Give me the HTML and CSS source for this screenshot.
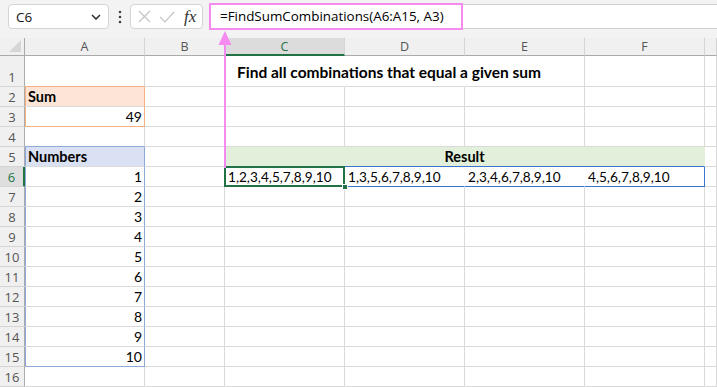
FILE: index.html
```html
<!DOCTYPE html>
<html lang="en">
<head>
  <meta charset="UTF-8">
  <title>FindSumCombinations</title>
  <link rel="stylesheet" href="styles.css">
</head>
<body>
  <div class="toolbar">
    <div class="namebox">
      <span>C6</span>
      <svg class="chev" width="10" height="6" viewBox="0 0 10 6"><path d="M1 1 L5 5 L9 1" fill="none" stroke="#333" stroke-width="1.6"/></svg>
    </div>
    <div class="dots">
      <svg width="4" height="14" viewBox="0 0 4 14"><circle cx="2" cy="2" r="1.3" fill="#444"/><circle cx="2" cy="7" r="1.3" fill="#444"/><circle cx="2" cy="12" r="1.3" fill="#444"/></svg>
    </div>
    <div class="fxbox">
      <svg width="13" height="13" viewBox="0 0 13 13"><path d="M1 1 L12 12 M12 1 L1 12" stroke="#c4c4c4" stroke-width="1.2"/></svg>
      <svg width="16" height="12" viewBox="0 0 16 12"><path d="M1 6 L6 11 L15 1" fill="none" stroke="#c4c4c4" stroke-width="1.2"/></svg>
      <span class="fx">fx</span>
    </div>
    <div class="formula">
      <div class="formula-text">=FindSumCombinations(A6:A15, A3)</div>
    </div>
  </div>

  <div class="sheet">
    <div class="hd corner"><svg width="12" height="12" viewBox="0 0 12 12"><polygon points="12,0 12,12 0,12" fill="#d6d6d6"/></svg></div>
    <div class="hd col">A</div>
    <div class="hd col">B</div>
    <div class="hd col active-col">C</div>
    <div class="hd col">D</div>
    <div class="hd col">E</div>
    <div class="hd col">F</div>
    <div class="hd col"></div>

    <div class="hd row tall">1</div>
    <div class="c tall a-sum-above"></div><div class="c tall"></div>
    <div class="c tall title spill"><span class="title-text">Find all combinations that equal a given sum</span></div>
    <div class="c tall spill"></div><div class="c tall"></div><div class="c tall"></div><div class="c tall"></div>

    <div class="hd row">2</div>
    <div class="c sum head">Sum</div><div class="c"></div><div class="c"></div><div class="c"></div><div class="c"></div><div class="c"></div><div class="c"></div>

    <div class="hd row">3</div>
    <div class="c sum sum-last num">49</div><div class="c"></div><div class="c"></div><div class="c"></div><div class="c"></div><div class="c"></div><div class="c"></div>

    <div class="hd row">4</div>
    <div class="c nums-above"></div><div class="c"></div><div class="c"></div><div class="c"></div><div class="c"></div><div class="c"></div><div class="c"></div>

    <div class="hd row">5</div>
    <div class="c nums head blue">Numbers</div><div class="c"></div>
    <div class="c result">Result</div>
    <div class="c"></div>

    <div class="hd row active-row">6</div>
    <div class="c nums num">1</div><div class="c"></div>
    <div class="c res selected">1,2,3,4,5,7,8,9,10</div>
    <div class="c res">1,3,5,6,7,8,9,10</div>
    <div class="c res">2,3,4,6,7,8,9,10</div>
    <div class="c res res-last">4,5,6,7,8,9,10</div>
    <div class="c"></div>

    <div class="hd row">7</div>
    <div class="c nums num">2</div><div class="c"></div><div class="c"></div><div class="c"></div><div class="c"></div><div class="c"></div><div class="c"></div>
    <div class="hd row">8</div>
    <div class="c nums num">3</div><div class="c"></div><div class="c"></div><div class="c"></div><div class="c"></div><div class="c"></div><div class="c"></div>
    <div class="hd row">9</div>
    <div class="c nums num">4</div><div class="c"></div><div class="c"></div><div class="c"></div><div class="c"></div><div class="c"></div><div class="c"></div>
    <div class="hd row">10</div>
    <div class="c nums num">5</div><div class="c"></div><div class="c"></div><div class="c"></div><div class="c"></div><div class="c"></div><div class="c"></div>
    <div class="hd row">11</div>
    <div class="c nums num">6</div><div class="c"></div><div class="c"></div><div class="c"></div><div class="c"></div><div class="c"></div><div class="c"></div>
    <div class="hd row">12</div>
    <div class="c nums num">7</div><div class="c"></div><div class="c"></div><div class="c"></div><div class="c"></div><div class="c"></div><div class="c"></div>
    <div class="hd row">13</div>
    <div class="c nums num">8</div><div class="c"></div><div class="c"></div><div class="c"></div><div class="c"></div><div class="c"></div><div class="c"></div>
    <div class="hd row">14</div>
    <div class="c nums num">9</div><div class="c"></div><div class="c"></div><div class="c"></div><div class="c"></div><div class="c"></div><div class="c"></div>
    <div class="hd row">15</div>
    <div class="c nums nums-last num">10</div><div class="c"></div><div class="c"></div><div class="c"></div><div class="c"></div><div class="c"></div><div class="c"></div>
    <div class="hd row">16</div>
    <div class="c"></div><div class="c"></div><div class="c"></div><div class="c"></div><div class="c"></div><div class="c"></div><div class="c"></div>

    <svg class="arrow" width="16" height="138" viewBox="0 0 16 138">
      <line x1="8" y1="10" x2="8" y2="137" stroke="#f58af0" stroke-width="2"/>
      <polygon points="8,0 1.5,14 14.5,14" fill="#f58af0"/>
    </svg>
  </div>
</body>
</html>
```

FILE: styles.css
```css
body {
  margin: 0;
  width: 717px;
  height: 387px;
  overflow: hidden;
  background: #fff;
  font-family: "Lato", "Liberation Sans", sans-serif;
  color: #000;
}

/* formula bar */
.toolbar {
  height: 38px;
  box-sizing: border-box;
  padding-top: 4px;
  background: #f3f3f3;
  display: flex;
  align-items: flex-start;
}
.namebox {
  margin-left: 8px;
  width: 101px;
  height: 25px;
  box-sizing: border-box;
  border: 1px solid #d4d4d4;
  border-radius: 4px;
  background: #fff;
  display: flex;
  align-items: center;
  justify-content: space-between;
  padding: 0 7px 0 7px;
  font-family: "Open Sans", sans-serif;
  font-size: 13.5px;
  color: #111;
}
.dots {
  width: 21px;
  height: 25px;
  display: flex;
  align-items: center;
  justify-content: center;
}
.fxbox {
  width: 73px;
  height: 25px;
  box-sizing: border-box;
  border: 1px solid #d4d4d4;
  border-radius: 4px;
  background: #fff;
  display: flex;
  align-items: center;
  gap: 8px;
  padding-left: 7px;
}
.fx {
  font-family: "Liberation Serif", serif;
  font-style: italic;
  font-size: 17px;
  color: #333;
  margin-left: 1px;
}
.formula {
  margin-left: 6px;
  flex: 1;
  height: 25px;
  box-sizing: border-box;
  border-top: 1px solid #cfcfcf;
  border-bottom: 1px solid #cfcfcf;
  background: #fff;
  display: flex;
}
.formula-text {
  width: 254px;
  height: 27px;
  margin-top: -2px;
  box-sizing: border-box;
  border: 2px solid #f58af0;
  background: #fff;
  padding-left: 9px;
  font-family: "Open Sans", sans-serif;
  font-size: 13.4px;
  line-height: 22px;
  white-space: nowrap;
}

/* sheet grid */
.sheet {
  position: relative;
  display: grid;
  grid-template-columns: 25px 120px 80px 120px 120px 120px 120px 12px;
  grid-template-rows: 18px 31px repeat(15, 20px);
}
.hd {
  box-sizing: border-box;
  background: #f0f0f0;
  color: #555;
  font-family: "Open Sans", sans-serif;
  font-size: 12.5px;
  display: flex;
  align-items: center;
  justify-content: center;
}
.hd.col {
  border-right: 1px solid #d4d4d4;
  border-bottom: 1px solid #ababab;
}
.hd.row {
  border-right: 1px solid #ababab;
  border-bottom: 1px solid #d4d4d4;
  font-size: 13px;
}
.hd.row.tall {
  align-items: flex-end;
}
.corner {
  border-right: 1px solid #ababab;
  border-bottom: 1px solid #ababab;
  justify-content: flex-end;
  align-items: flex-end;
  padding: 0 3px 3px 0;
}
.active-col {
  background: #dcdcdc;
  color: #217346;
  border-bottom: 2px solid #217346 !important;
}
.active-row {
  background: #dedede;
  color: #217346;
  border-right: 2px solid #217346 !important;
}

.c {
  box-sizing: border-box;
  border-right: 1px solid #dadada;
  border-bottom: 1px solid #dadada;
  font-size: 14.5px;
  padding: 0 3px;
  display: flex;
  align-items: flex-end;
  padding-bottom: 1px;
  white-space: nowrap;
}
.c.spill {
  border-right-color: #fff;
}
.c.num {
  justify-content: flex-end;
  padding-right: 2px;
  font-size: 14px;
}
.c.head {
  font-weight: bold;
}
.c.title {
  overflow: visible;
  font-weight: bold;
  font-size: 15.5px;
  padding-left: 12px;
  padding-bottom: 5px;
}
.title-text {
  position: relative;
  z-index: 1;
}

/* Sum block */
.a-sum-above {
  border-bottom-color: #f4b183;
}
.sum {
  border-right-color: #f4b183;
  box-shadow: inset 1px 0 0 #f4b183;
}
.sum.head {
  background: #fce4d6;
}
.sum-last {
  border-bottom-color: #f4b183;
}

/* Numbers block */
.nums-above {
  border-bottom-color: #8eaadb;
}
.nums {
  border-right-color: #8eaadb;
  box-shadow: inset 1px 0 0 #8eaadb;
}
.nums.head {
  background: #d9e1f2;
}
.nums-last {
  border-bottom-color: #8eaadb;
}

/* Result */
.result {
  grid-column: span 4;
  background: #e2efda;
  font-weight: bold;
  justify-content: center;
  border-right-color: #e2efda;
  border-bottom-color: #3c74cf;
}
.res {
  font-size: 13.6px;
  border-right-color: #fff;
  border-bottom-color: #3c74cf;
}
.res-last {
  border-right-color: #3c74cf;
}
.selected {
  position: relative;
}
.selected::before {
  content: "";
  position: absolute;
  left: -1px;
  top: -1px;
  width: 121px;
  height: 21px;
  border: 2px solid #217346;
  box-sizing: border-box;
}
.selected::after {
  content: "";
  position: absolute;
  right: -4px;
  bottom: -4px;
  width: 6px;
  height: 6px;
  background: #217346;
  border: 1px solid #fff;
  box-sizing: border-box;
}

.arrow {
  position: absolute;
  left: 217px;
  top: -7px;
}
```
